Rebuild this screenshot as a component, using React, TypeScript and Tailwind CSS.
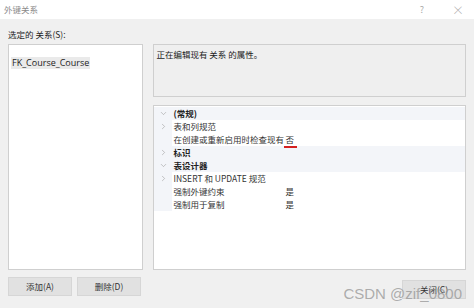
import { ChevronDown, ChevronRight } from "lucide-react";

const font = { fontFamily: '"Microsoft YaHei", "Noto Sans CJK SC", "Noto Sans", sans-serif' };

type Row = { label: string; value?: string; cat?: boolean; open?: boolean; chevron?: boolean; mark?: boolean };

const rows: Row[] = [
  { label: "(常规)", cat: true, open: true },
  { label: "表和列规范", chevron: true },
  { label: "在创建或重新启用时检查现有", value: "否", mark: true },
  { label: "标识", cat: true, open: false },
  { label: "表设计器", cat: true, open: true },
  { label: "INSERT 和 UPDATE 规范", chevron: true },
  { label: "强制外键约束", value: "是" },
  { label: "强制用于复制", value: "是" },
];

const PropRow = ({ row }: { row: Row }) => (
  <div className={`flex h-[13px] items-center ${row.cat ? "bg-[#f3f5f9]" : "bg-white"}`}>
    <div className="flex h-full w-[18px] shrink-0 items-center justify-center bg-[#f3f5f9] text-[#9a9a9a]">
      {row.cat ? (
        row.open ? (
          <ChevronDown size={9} strokeWidth={1.5} />
        ) : (
          <ChevronRight size={9} strokeWidth={1.5} />
        )
      ) : row.chevron ? (
        <ChevronRight size={9} strokeWidth={1.5} />
      ) : null}
    </div>
    <div className={`w-[113px] shrink-0 whitespace-nowrap pl-[1px] text-[8.5px] leading-none ${row.cat ? "font-bold text-[#222]" : "text-[#333]"}`}>
      {row.label}
    </div>
    {row.value && (
      <div className="relative text-[8.5px] leading-none text-[#333]">
        {row.value}
        {row.mark && <div className="absolute left-[-1px] top-[11px] h-[2px] w-[13px] bg-[#d42020]" />}
      </div>
    )}
  </div>
);

const Btn = ({ label, className = "" }: { label: string; className?: string }) => (
  <div className={`flex h-[19px] w-[64px] items-center justify-center border border-[#d6d6d6] bg-[#e1e1e1] text-[8.5px] text-[#333] ${className}`}>
    {label}
  </div>
);

export default function App() {
  return (
    <div className="h-[308px] w-[474px] overflow-hidden bg-[#f0f0f0]" style={font}>
      <div className="flex h-[19px] items-center bg-white pl-[4px] pr-[10px] text-[8.5px] text-[#8a8a8a]">
        <span>外键关系</span>
        <span className="ml-auto mr-[28px] text-[9px] text-[#aaa]">?</span>
        <span className="text-[12px] font-light text-[#aaa]">×</span>
      </div>
      <div className="px-[8px] pt-[9px]">
        <div className="h-[16px] text-[8.5px] leading-[12px] text-[#222]">选定的 关系(S):</div>
        <div className="flex gap-[10px]">
          <div className="h-[226px] w-[136px] border border-[#cfcfcf] bg-white p-[2px]">
            <div
              className="inline-block bg-[#eaeaea] px-[1px] text-[9px] leading-[12px] text-[#222]"
              style={{ fontFamily: '"Open Sans", "Noto Sans", sans-serif' }}
            >
              FK_Course_Course
            </div>
          </div>
          <div className="flex w-[314px] flex-col gap-[8px]">
            <div className="h-[53px] border border-[#cfcfcf] bg-[#efefef] px-[2px] pt-[3px] text-[8.5px] leading-[12px] text-[#222]">
              正在编辑现有 关系 的属性。
            </div>
            <div className="h-[165px] border border-[#cfcfcf] bg-white pt-[1px]">
              {rows.map((r) => (
                <PropRow key={r.label} row={r} />
              ))}
            </div>
          </div>
        </div>
        <div className="relative mt-[7px] flex items-start gap-[5px]">
          <Btn label="添加(A)" />
          <Btn label="删除(D)" />
          <Btn label="关闭(C)" className="ml-auto mt-[3px]" />
          <div
            className="absolute right-[4px] top-[9px] text-[15px] leading-none text-[#9a9a9a]/80"
            style={{ fontFamily: '"Liberation Sans", Arial, sans-serif' }}
          >
            CSDN @zif_0800
          </div>
        </div>
      </div>
    </div>
  );
}
